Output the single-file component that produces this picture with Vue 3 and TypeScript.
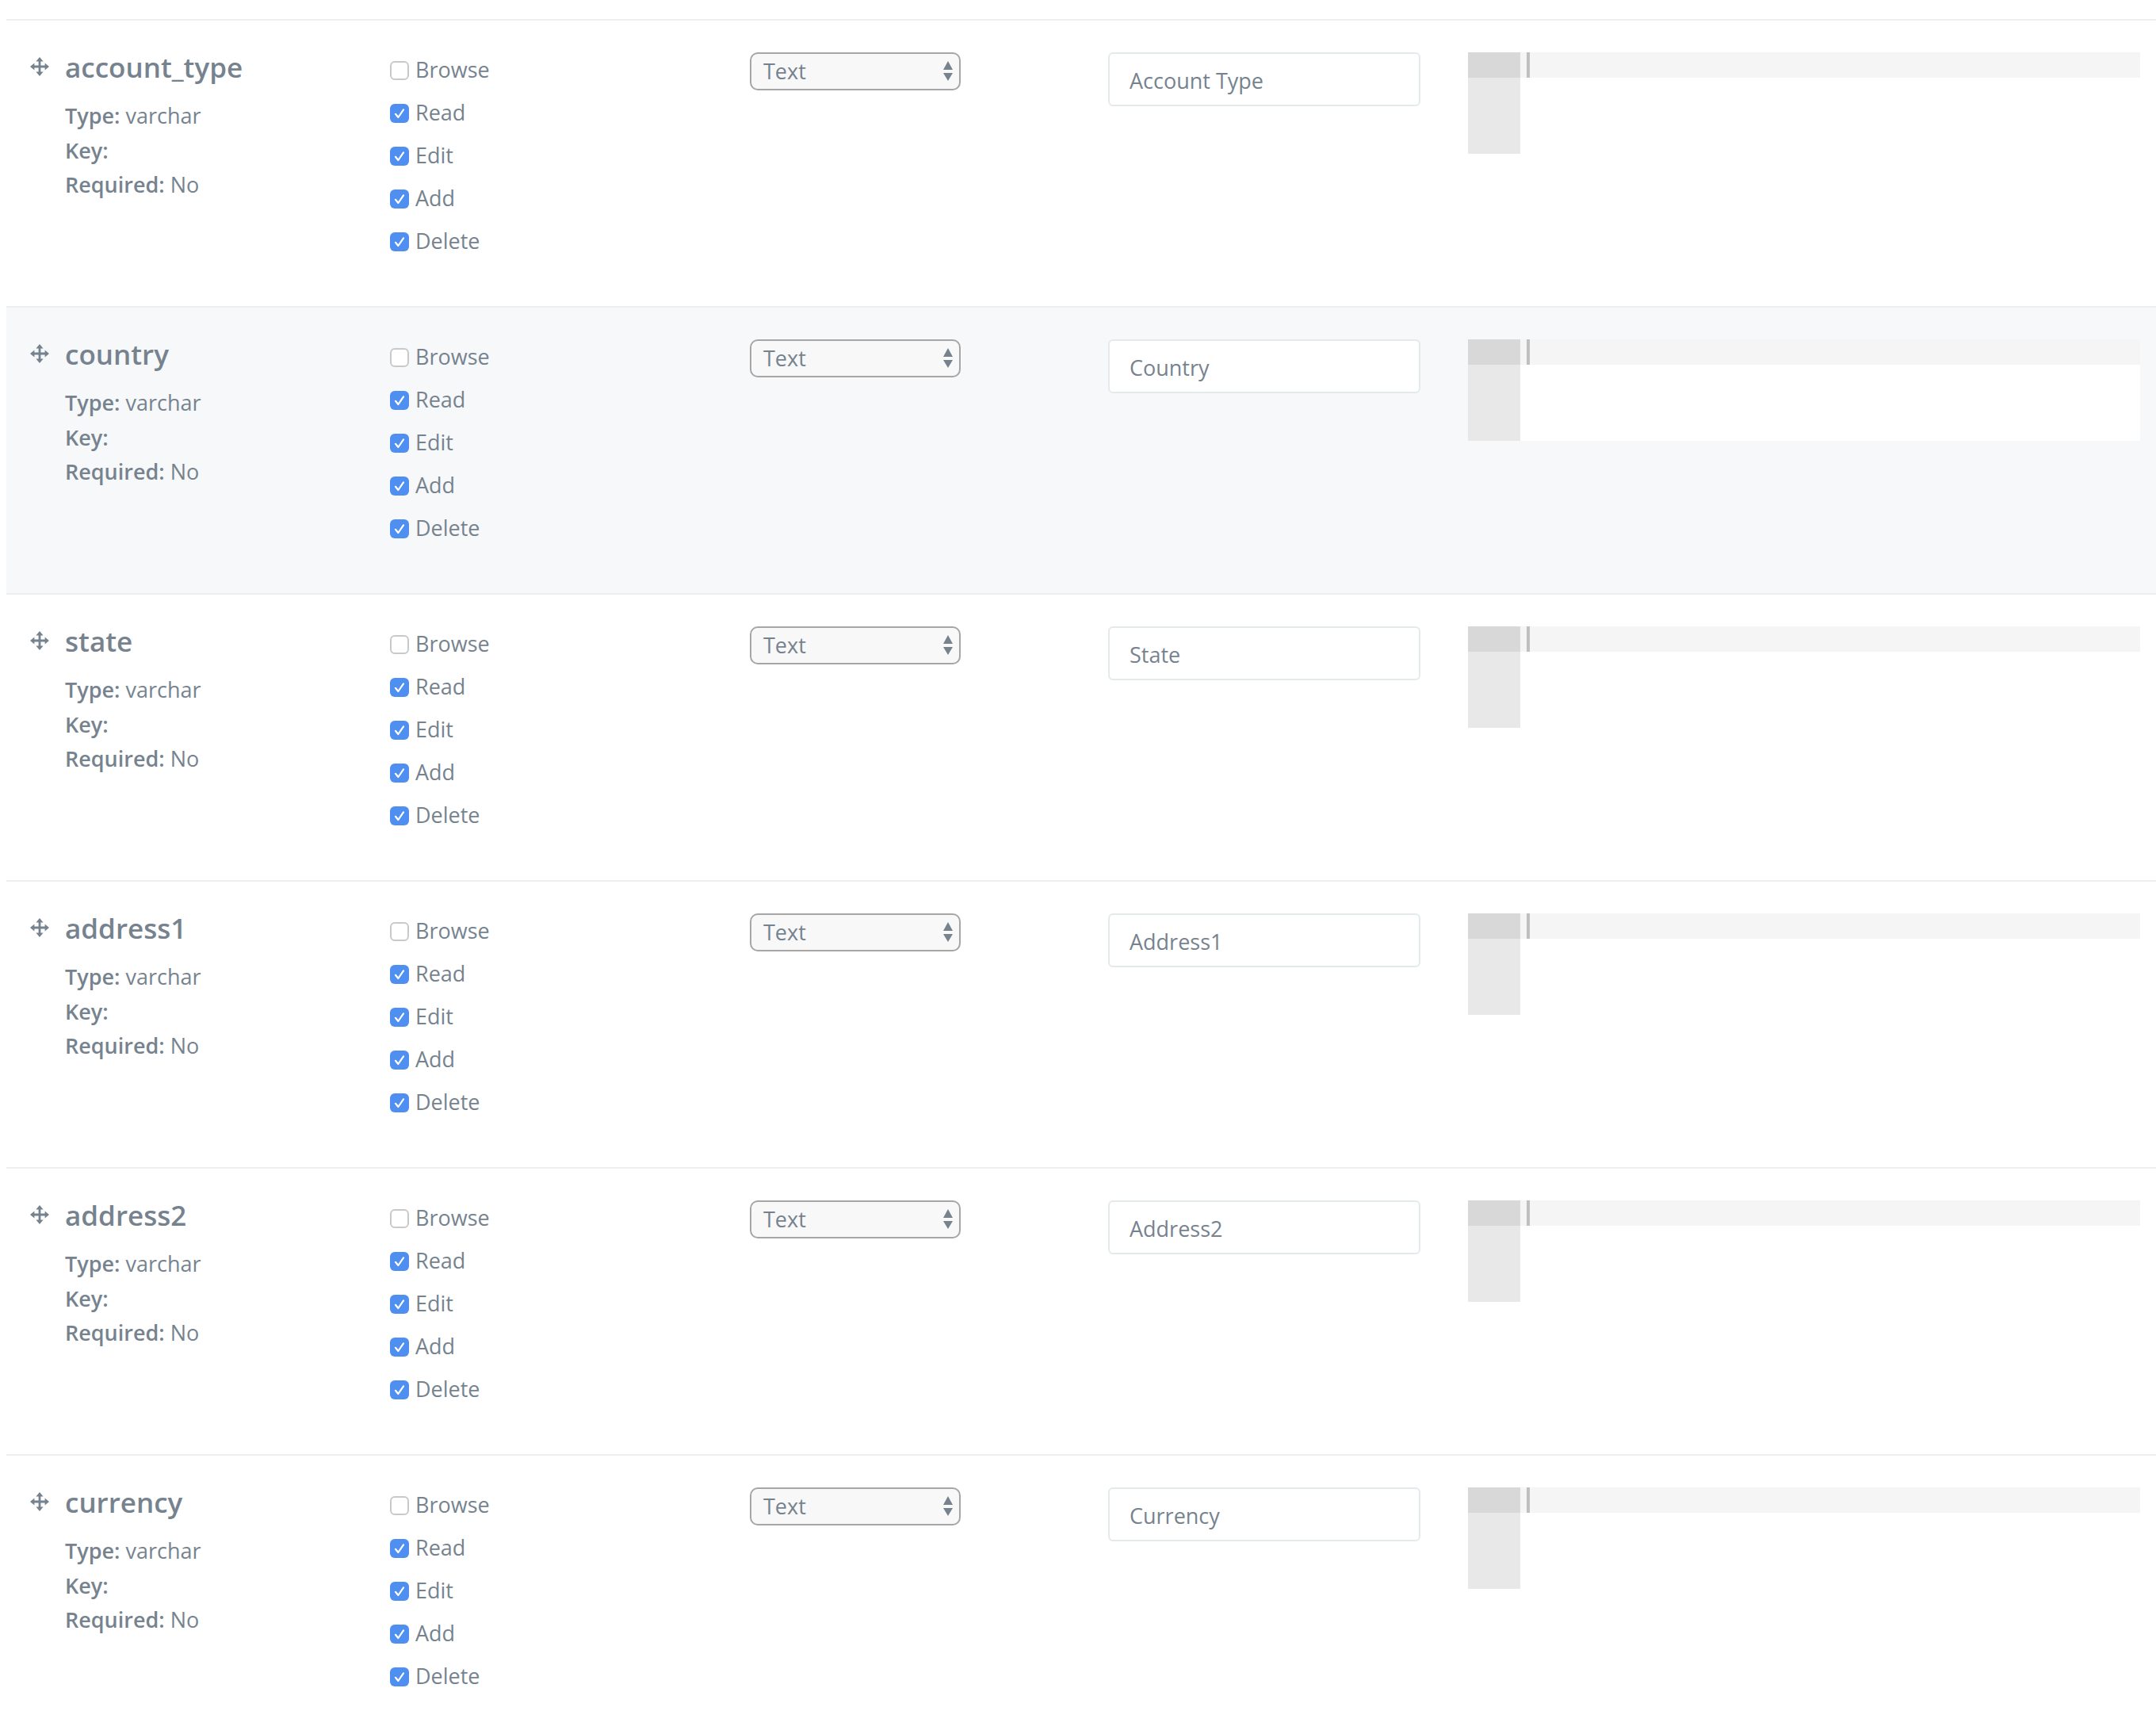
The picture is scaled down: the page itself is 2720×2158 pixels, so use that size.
<script setup lang="ts">
const fields = [
  { name: 'account_type', label: 'Account Type' },
  { name: 'country', label: 'Country' },
  { name: 'state', label: 'State' },
  { name: 'address1', label: 'Address1' },
  { name: 'address2', label: 'Address2' },
  { name: 'currency', label: 'Currency' },
]

const perms = [
  { label: 'Browse', on: false },
  { label: 'Read', on: true },
  { label: 'Edit', on: true },
  { label: 'Add', on: true },
  { label: 'Delete', on: true },
]
</script>

<template>
  <div class="fields">
    <div v-for="(f, i) in fields" :key="f.name" class="row" :class="{ alt: i === 1 }">
      <div class="field-col">
        <svg class="drag" viewBox="0 0 24 24" aria-hidden="true">
          <path d="M12 0l4.6 5.4h-3.2v5.2h5.2V7.4L24 12l-5.4 4.6v-3.2h-5.2v5.2h3.2L12 24l-4.6-5.4h3.2v-5.2H5.4v3.2L0 12l5.4-4.6v3.2h5.2V5.4H7.4z" fill="currentColor" />
        </svg>
        <div class="field-info">
          <h4 class="field-name">{{ f.name }}</h4>
          <div class="meta"><strong>Type:</strong> varchar</div>
          <div class="meta"><strong>Key:</strong></div>
          <div class="meta"><strong>Required:</strong> No</div>
        </div>
      </div>

      <ul class="perms">
        <li v-for="p in perms" :key="p.label">
          <span class="box" :class="{ on: p.on }">
            <svg v-if="p.on" viewBox="0 0 24 24" aria-hidden="true">
              <path d="M7 12.8l3.4 4.2 6.6-9.6" fill="none" stroke="#fff" stroke-width="2.2" stroke-linecap="round" stroke-linejoin="round" />
            </svg>
          </span>
          {{ p.label }}
        </li>
      </ul>

      <div class="type-col">
        <div class="select">
          Text
          <span class="carets">
            <i class="up"></i>
            <i class="down"></i>
          </span>
        </div>
      </div>

      <div class="label-col">
        <div class="input">{{ f.label }}</div>
      </div>

      <div class="editor">
        <div class="editor-gutter">
          <div class="gutter-active"></div>
        </div>
        <div class="editor-body">
          <div class="editor-line">
            <span class="cursor"></span>
          </div>
        </div>
      </div>
    </div>
  </div>
</template>

<style scoped>
.fields {
  padding: 24px 0 0 8px;
  font-family: 'Open Sans', 'Noto Sans', sans-serif;
  font-size: 27px;
  color: #76838f;
}
.row {
  display: grid;
  grid-template-columns: 454px 454px 452px 454px 1fr;
  height: 362px;
  box-sizing: border-box;
  padding: 40px 20px 0 30px;
  border-top: 2px solid #eeeeee;
}
.row.alt {
  background: #f7f8fa;
}
.field-col {
  display: flex;
  gap: 20px;
}
.drag {
  flex: none;
  width: 24px;
  height: 24px;
  margin-top: 6px;
}
.field-name {
  margin: -3px 0 17px;
  font-size: 35px;
  font-weight: 600;
  line-height: 44px;
}
.meta {
  line-height: 43.5px;
}
.meta strong {
  font-weight: 600;
}
.perms {
  list-style: none;
  margin: 0;
  padding: 0;
}
.perms li {
  display: flex;
  align-items: center;
  gap: 8px;
  height: 54px;
  margin-top: -6px;
  margin-bottom: 6px;
}
.box {
  flex: none;
  box-sizing: border-box;
  width: 24px;
  height: 24px;
  margin-top: 3px;
  background: #fff;
  border: 2px solid #c9c9c9;
  border-radius: 6px;
}
.box.on {
  background: #4f8ff2;
  border: 0;
}
.box svg {
  display: block;
  width: 24px;
  height: 24px;
}
.select {
  position: relative;
  box-sizing: border-box;
  width: 266px;
  height: 48px;
  padding-left: 15px;
  line-height: 44px;
  background: #f8f8f8;
  border: 2px solid #a6a6a6;
  border-radius: 10px;
}
.carets {
  position: absolute;
  top: 9px;
  right: 8px;
  display: flex;
  flex-direction: column;
  gap: 4px;
}
.carets i {
  display: block;
  width: 0;
  height: 0;
  border-left: 6.5px solid transparent;
  border-right: 6.5px solid transparent;
}
.carets .up {
  border-bottom: 11px solid #76838f;
}
.carets .down {
  border-top: 10px solid #76838f;
}
.input {
  box-sizing: border-box;
  width: 394px;
  height: 68px;
  padding-left: 25px;
  line-height: 67px;
  background: #fff;
  border: 2px solid #e4eaec;
  border-radius: 6px;
}
.editor {
  display: flex;
  height: 128px;
  background: #fff;
}
.editor-gutter {
  flex: none;
  width: 66px;
  background: #e8e8e8;
}
.gutter-active {
  height: 32px;
  background: #d8d8d8;
}
.editor-body {
  flex: 1;
}
.editor-line {
  height: 32px;
  padding-left: 8px;
  background: #f5f5f5;
}
.cursor {
  display: block;
  width: 4px;
  height: 32px;
  background: #bfbfbf;
}
</style>

<style>
html,
body {
  height: 100%;
  overflow: hidden;
  background: #fff;
}
</style>
